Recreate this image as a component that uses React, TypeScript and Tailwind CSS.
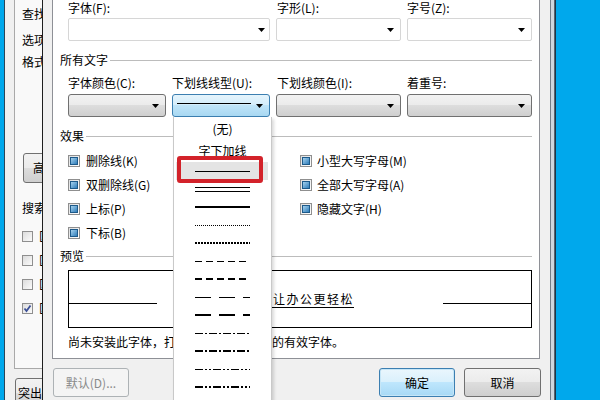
import React from 'react';

const FONT = "font-['Noto_Sans_CJK_SC','Noto_Sans',sans-serif]";

function Tri() {
  return (
    <svg width="7" height="4" viewBox="0 0 7 4" className="shrink-0">
      <path d="M0 0H7L3.5 4Z" fill="#000" />
    </svg>
  );
}

function TriBox() {
  return (
    <div className="w-[12px] h-[12px] shrink-0 border border-[#8f8f8f] bg-[linear-gradient(135deg,#dedede,#ffffff)] flex items-center justify-center">
      <div className="w-[8px] h-[8px] border border-[#1d5a8a] bg-[linear-gradient(135deg,#a6d2ee,#2f7dba)]" />
    </div>
  );
}

function BackBox({ checked }: { checked?: boolean }) {
  return (
    <div className="w-[11px] h-[11px] shrink-0 border border-[#8f8f8f] bg-[linear-gradient(135deg,#dcdcdc,#fbfbfb)] flex items-center justify-center">
      {checked && (
        <svg width="9" height="9" viewBox="0 0 9 9">
          <path d="M1.5 4.5L3.5 7L7.5 1.5" stroke="#3b4f96" strokeWidth="1.8" fill="none" />
        </svg>
      )}
    </div>
  );
}

function GroupHeader({ title }: { title: string }) {
  return (
    <div className="h-[16px] flex items-center pl-[7px] pr-[7px]">
      <span className="whitespace-nowrap">{title}</span>
      <div className="flex-1 h-px bg-[#bcbcbc] ml-[2px]" />
    </div>
  );
}

type LineStyle = { w: number; d?: string; double?: boolean };

const LINES: LineStyle[] = [
  { w: 1 },
  { w: 1, double: true },
  { w: 2 },
  { w: 1, d: '1 1' },
  { w: 2, d: '2 1' },
  { w: 1, d: '7 4' },
  { w: 2, d: '7 4' },
  { w: 1, d: '16 8' },
  { w: 2, d: '16 8' },
  { w: 1, d: '8 2 2 2' },
  { w: 2, d: '8 2 2 2' },
  { w: 1, d: '8 2 2 2 2 2' },
  { w: 2, d: '8 2 2 2 2 2' },
];

function LineSample({ s }: { s: LineStyle }) {
  return (
    <svg width="55" height="6" viewBox="0 0 55 6" shapeRendering="crispEdges">
      {s.double ? (
        <>
          <line x1="0" y1="1.5" x2="55" y2="1.5" stroke="#000" strokeWidth="1" />
          <line x1="0" y1="5.5" x2="55" y2="5.5" stroke="#000" strokeWidth="1" />
        </>
      ) : (
        <line
          x1="0"
          y1={s.w === 2 ? 3 : 3.5}
          x2="55"
          y2={s.w === 2 ? 3 : 3.5}
          stroke="#000"
          strokeWidth={s.w}
          strokeDasharray={s.d}
        />
      )}
    </svg>
  );
}

export default function App() {
  return (
    <div className={`relative w-[600px] h-[400px] overflow-hidden flex text-[12px] leading-[16px] text-black ${FONT}`}>
      {/* desktop strip left */}
      <div className="w-[4px] h-full bg-[#00a8ec] shrink-0" />
      <div className="w-[1px] h-full bg-[#2a4659] shrink-0" />

      {/* back dialog (Find & Replace) */}
      <div className="w-[37px] h-full shrink-0 bg-[#f0f0f0] overflow-hidden flex flex-col">
        <div className="ml-[9px] w-[80px] h-[369px] shrink-0 border-l border-b border-[#a9a9a9] bg-[#f9f9f9] pl-[7px] flex flex-col whitespace-nowrap">
          <div className="mt-[6px] h-[16px]">查找(D)</div>
          <div className="mt-[10px] h-[16px]">选项:</div>
          <div className="mt-[6px] h-[16px]">格式:</div>
          <div className="mt-[83px] ml-[1px] w-[70px] h-[30px] border border-[#707070] rounded-[3px] bg-[linear-gradient(#f2f2f2,#ebebeb_50%,#dddddd_50%,#cfcfcf)] flex items-center pl-[9px]">
            高级
          </div>
          <div className="mt-[17px] h-[16px]">搜索</div>
          <div className="mt-[8px] flex flex-col">
            {[false, false, false, true].map((c, i) => (
              <div key={i} className="h-[24px] flex items-center gap-[6px]">
                <BackBox checked={c} />
                <span>区分</span>
              </div>
            ))}
          </div>
        </div>
        <div className="mt-[9px] ml-[10px] w-[70px] h-[30px] shrink-0 border border-[#707070] rounded-[3px] bg-[linear-gradient(#f2f2f2,#ebebeb_50%,#dddddd_50%,#cfcfcf)] flex items-center pl-[2px] whitespace-nowrap">
          突出显示
        </div>
      </div>

      {/* front dialog (Find Font) */}
      <div className="w-[508px] h-full shrink-0 border-l border-[#1e1e1e] bg-[#f0f0f0] flex flex-col">
        <div className="ml-[9px] w-[488px] h-[359px] shrink-0 bg-white border-l border-r border-b border-[#8e9096] flex flex-col">
          {/* row 1 */}
          <div className="flex gap-[6px] pl-[15px] pr-[7px] h-[16px]">
            <div className="w-[202px]">字体(F):</div>
            <div className="w-[125px] pl-[1px]">字形(L):</div>
            <div className="w-[125px]">字号(Z):</div>
          </div>
          <div className="mt-[2px] flex gap-[6px] pl-[15px] pr-[7px]">
            <div className="w-[202px] h-[23px] border border-[#d6d6d6] rounded-[2px] bg-white flex items-center justify-end pr-[4px]"><Tri /></div>
            <div className="w-[125px] h-[23px] border border-[#d6d6d6] rounded-[2px] bg-white flex items-center justify-end pr-[6px]"><Tri /></div>
            <div className="w-[125px] h-[23px] border border-[#d6d6d6] rounded-[2px] bg-white flex items-center justify-end pr-[6px]"><Tri /></div>
          </div>

          <div className="mt-[11px]"><GroupHeader title="所有文字" /></div>
          <div className="mt-[7px] flex gap-[6px] pl-[15px] pr-[7px] h-[16px] whitespace-nowrap">
            <div className="w-[98px]">字体颜色(C):</div>
            <div className="w-[98px]">下划线线型(U):</div>
            <div className="w-[125px] pl-[1px]">下划线颜色(I):</div>
            <div className="w-[125px]">着重号:</div>
          </div>
          <div className="mt-[3px] flex gap-[6px] pl-[15px] pr-[7px]">
            <div className="w-[98px] h-[23px] border border-[#707070] rounded-[3px] bg-[linear-gradient(#f2f2f2,#ebebeb_50%,#dddddd_50%,#cfcfcf)] flex items-center justify-end pr-[6px]"><Tri /></div>
            <div className="w-[98px] h-[23px] border border-[#3c7fb1] rounded-[3px] bg-[linear-gradient(#e5f4fc,#d3edfb_50%,#bfe4f8_50%,#a8d8f2)] flex items-center pl-[4px] pr-[6px] gap-[5px]">
              <div className="flex-1 h-px bg-black mb-[4px]" />
              <Tri />
            </div>
            <div className="w-[125px] h-[23px] border border-[#707070] rounded-[3px] bg-[linear-gradient(#f2f2f2,#ebebeb_50%,#dddddd_50%,#cfcfcf)] flex items-center justify-end pr-[6px]"><Tri /></div>
            <div className="w-[125px] h-[23px] border border-[#707070] rounded-[3px] bg-[linear-gradient(#f2f2f2,#ebebeb_50%,#dddddd_50%,#cfcfcf)] flex items-center justify-end pr-[6px]"><Tri /></div>
          </div>

          <div className="mt-[11px]"><GroupHeader title="效果" /></div>
          <div className="mt-[5px] flex pl-[15px] pr-[7px]">
            <div className="w-[232px] flex flex-col">
              {['删除线(K)', '双删除线(G)', '上标(P)', '下标(B)'].map((t) => (
                <div key={t} className="h-[24px] flex items-center gap-[6px]">
                  <TriBox />
                  <span>{t}</span>
                </div>
              ))}
            </div>
            <div className="flex-1 flex flex-col">
              {['小型大写字母(M)', '全部大写字母(A)', '隐藏文字(H)'].map((t) => (
                <div key={t} className="h-[24px] flex items-center gap-[5px]">
                  <TriBox />
                  <span>{t}</span>
                </div>
              ))}
            </div>
          </div>

          <div className="mt-[3px]"><GroupHeader title="预览" /></div>
          <div className="mt-[6px] ml-[15px] mr-[7px] h-[58px] border border-black flex items-center">
            <div className="w-[88px] h-px bg-black mt-[9px]" />
            <div className="flex-1 flex justify-center">
              <span className="underline decoration-1 underline-offset-[3px] tracking-[1.5px]">微软让办公更轻松</span>
            </div>
            <div className="w-[88px] h-px bg-black mt-[9px]" />
          </div>
          <div className="mt-[6px] pl-[15px] h-[16px] whitespace-nowrap">尚未安装此字体，打印时将使用最相近的有效字体。</div>
        </div>

        {/* buttons */}
        <div className="mt-[9px] flex pl-[10px] pr-[9px]">
          <div className="w-[76px] h-[29px] border border-[#adb2b5] rounded-[3px] bg-[#f4f4f4] text-[#8a8a8a] flex items-center justify-center">默认(D)...</div>
          <div className="flex-1" />
          <div className="w-[76px] h-[29px] border border-[#3c7fb1] rounded-[3px] bg-[linear-gradient(#eaf6fd,#d9f0fc_50%,#bee6fd_50%,#a7d9f5)] shadow-[inset_0_0_0_1px_#c6e6f7] flex items-center justify-center">确定</div>
          <div className="w-[77px] h-[29px] ml-[9px] border border-[#707070] rounded-[3px] bg-[linear-gradient(#f2f2f2,#ebebeb_50%,#dddddd_50%,#cfcfcf)] flex items-center justify-center">取消</div>
        </div>
      </div>

      {/* right frame of dialog */}
      <div className="w-[6px] h-full shrink-0 flex">
        <div className="w-[1px] bg-[#6f7b86]" />
        <div className="w-[3px] bg-[#cdd6de]" />
        <div className="w-[1px] bg-[#56636e]" />
        <div className="w-[1px] bg-[#1d3446]" />
      </div>
      <div className="flex-1 h-full bg-[#00a8ec]" />

      {/* open dropdown list */}
      <div className="absolute left-[173px] top-[117px] w-[99px] h-[290px] bg-white border-l border-r border-[#c9c9c9] shadow-[2px_2px_3px_rgba(0,0,0,0.15)] flex flex-col">
        <div className="h-[23px] flex items-center justify-center">(无)</div>
        <div className="h-[22px] flex items-center justify-center">字下加线</div>
        {LINES.map((s, i) => (
          <div
            key={i}
            className={`h-[18px] ml-[2px] mr-[3px] flex items-center justify-center ${i === 0 ? 'bg-[#e4e4e4]' : ''}`}
          >
            <LineSample s={s} />
          </div>
        ))}
      </div>

      {/* red annotation box */}
      <div className="absolute left-[177px] top-[156px] w-[86px] h-[27px] border-[4px] border-[#d3222a] rounded-[3px]" />
    </div>
  );
}
